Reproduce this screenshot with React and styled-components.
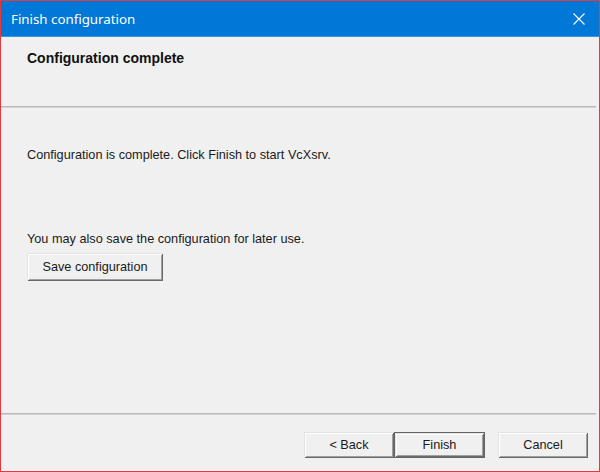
import React from "react";
import styled, { createGlobalStyle } from "styled-components";

const Global = createGlobalStyle`
  html, body { margin: 0; padding: 0; background: #f0f0f0; }
  * { box-sizing: border-box; }
`;

const Window = styled.div`
  width: 600px;
  height: 472px;
  border: 1px solid #e8393a;
  background: #f0f0f0;
  display: flex;
  flex-direction: column;
  font-family: "Liberation Sans", Arial, sans-serif;
  color: #000;
`;

const TitleBar = styled.div`
  height: 36px;
  background: #0078d7;
  display: flex;
  align-items: center;
  justify-content: space-between;
  padding: 0 12px 0 10px;
  color: #fff;
  font-family: "Noto Sans", "Open Sans", sans-serif;
  font-size: 13.3px;
  border-bottom: 1px solid #3a94de;
`;

const Close = styled.div`
  width: 16px;
  height: 16px;
  display: flex;
  align-items: center;
  justify-content: center;
`;

const Header = styled.div`
  height: 69px;
  padding: 13px 0 0 26px;
`;

const Heading = styled.div`
  font-weight: bold;
  font-size: 14px;
  line-height: 16px;
  color: #111;
`;

const Separator = styled.div`
  height: 2px;
  margin-right: 3px;
  border-top: 1px solid #b9b9b9;
  border-bottom: 1px solid #d4d4d4;
`;

const Content = styled.div`
  flex: 1;
  padding: 39px 26px 0 26px;
  display: flex;
  flex-direction: column;
  align-items: flex-start;
`;

const Text = styled.div`
  font-size: 12.7px;
  line-height: 16px;
  color: #1a1a1a;
  margin-top: ${(p) => p.$mt || 0}px;
`;

const Button = styled.button`
  width: ${(p) => p.$w || 90}px;
  height: ${(p) => p.$h || 26}px;
  margin-top: ${(p) => p.$mt || 0}px;
  background: #f0f0f0;
  border: ${(p) => (p.$default ? "1px solid #646464" : "none")};
  box-shadow: inset 1px 1px #e3e3e3, inset -1px -1px #696969,
    inset 2px 2px #ffffff, inset -2px -2px #a0a0a0;
  font-family: "Liberation Sans", Arial, sans-serif;
  font-size: 12.7px;
  color: #1a1a1a;
  padding: 0;
  cursor: default;
`;

const Footer = styled.div`
  height: 56px;
  display: flex;
  justify-content: flex-end;
  align-items: flex-start;
  padding: 17px 11px 0 0;
`;

const Gap = styled.div`
  width: ${(p) => p.$w}px;
`;

export default function App() {
  return (
    <>
      <Global />
      <Window>
        <TitleBar>
          <span>Finish configuration</span>
          <Close>
            <svg width="14" height="14" viewBox="0 0 14 14">
              <path d="M1.5 1.5L12.5 12.5M12.5 1.5L1.5 12.5" stroke="#fff" strokeWidth="1.1" />
            </svg>
          </Close>
        </TitleBar>
        <Header>
          <Heading>Configuration complete</Heading>
        </Header>
        <Separator />
        <Content>
          <Text>Configuration is complete. Click Finish to start VcXsrv.</Text>
          <Text $mt={68}>You may also save the configuration for later use.</Text>
          <Button $w={136} $h={28} $mt={6}>Save configuration</Button>
        </Content>
        <Separator />
        <Footer>
          <Button $w={90}>&lt; Back</Button>
          <Button $w={91} $default>Finish</Button>
          <Gap $w={13} />
          <Button $w={90}>Cancel</Button>
        </Footer>
      </Window>
    </>
  );
}
